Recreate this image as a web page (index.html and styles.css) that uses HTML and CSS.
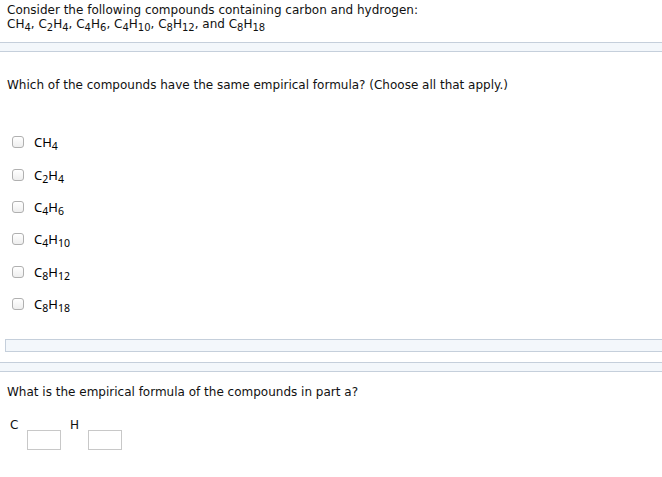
FILE: index.html
```html
<!DOCTYPE html>
<html>
<head>
<meta charset="utf-8">
<link rel="stylesheet" href="styles.css">
</head>
<body>
<div class="intro">
  <div class="line">Consider the following compounds containing carbon and hydrogen:</div>
  <div class="line">CH<sub>4</sub>, C<sub>2</sub>H<sub>4</sub>, C<sub>4</sub>H<sub>6</sub>, C<sub>4</sub>H<sub>10</sub>, C<sub>8</sub>H<sub>12</sub>, and C<sub>8</sub>H<sub>18</sub></div>
</div>
<div class="bar"></div>
<div class="question">Which of the compounds have the same empirical formula? (Choose all that apply.)</div>
<ul class="options">
  <li><span class="box"></span><span class="label">CH<sub>4</sub></span></li>
  <li><span class="box"></span><span class="label">C<sub>2</sub>H<sub>4</sub></span></li>
  <li><span class="box"></span><span class="label">C<sub>4</sub>H<sub>6</sub></span></li>
  <li><span class="box"></span><span class="label">C<sub>4</sub>H<sub>10</sub></span></li>
  <li><span class="box"></span><span class="label">C<sub>8</sub>H<sub>12</sub></span></li>
  <li><span class="box"></span><span class="label">C<sub>8</sub>H<sub>18</sub></span></li>
</ul>
<div class="feedback"></div>
<div class="bar bar2"></div>
<div class="question q2">What is the empirical formula of the compounds in part a?</div>
<div class="answers">
  <div class="field"><span class="el">C</span><span class="input"></span></div>
  <div class="field"><span class="el">H</span><span class="input"></span></div>
</div>
</body>
</html>
```
FILE: styles.css
```css
html, body {
  margin: 0;
  padding: 0;
  background: #fff;
}
body {
  font-family: "DejaVu Sans", Verdana, sans-serif;
  font-size: 12px;
  color: #111;
}
sub {
  font-size: 10px;
  vertical-align: -3px;
  line-height: 0;
}
.intro {
  padding: 3px 7px 0 7px;
}
.line {
  line-height: 14px;
  height: 14px;
}
.bar {
  margin-top: 11px;
  height: 8px;
  background: #f3f7fb;
  border-top: 1px solid #c5cfdb;
  border-bottom: 1px solid #c5cfdb;
}
.question {
  margin: 26px 0 0 7px;
  line-height: 14px;
}
.options {
  list-style: none;
  margin: 34px 0 0 0;
  padding: 0 0 0 12px;
}
.options li {
  display: flex;
  align-items: center;
  height: 32.4px;
  gap: 10px;
}
.box {
  width: 10px;
  height: 10px;
  border: 1px solid #b0b0b0;
  border-radius: 3px;
  background: linear-gradient(#fff, #eeeeee);
}
.label {
  font-family: "Noto Sans", "DejaVu Sans", sans-serif;
  font-size: 13px;
  color: #000;
}
.label sub {
  font-size: 10.5px;
  vertical-align: -3px;
}
.feedback {
  margin: 19px 0 0 5px;
  height: 11px;
  background: #f3f7fb;
  border: 1px solid #c5cfdb;
  border-right: none;
}
.bar2 {
  margin-top: 10px;
}
.q2 {
  margin-top: 13px;
}
.answers {
  display: flex;
  padding: 19px 0 0 10px;
}
.field {
  display: flex;
  align-items: flex-start;
}
.field .el {
  line-height: 14px;
  width: 17px;
}
.field + .field .el {
  width: 18px;
}
.input {
  margin-top: 12px;
  width: 32px;
  height: 18px;
  border: 1px solid #c8c8c8;
  background: #fff;
  margin-right: 9px;
}
```
